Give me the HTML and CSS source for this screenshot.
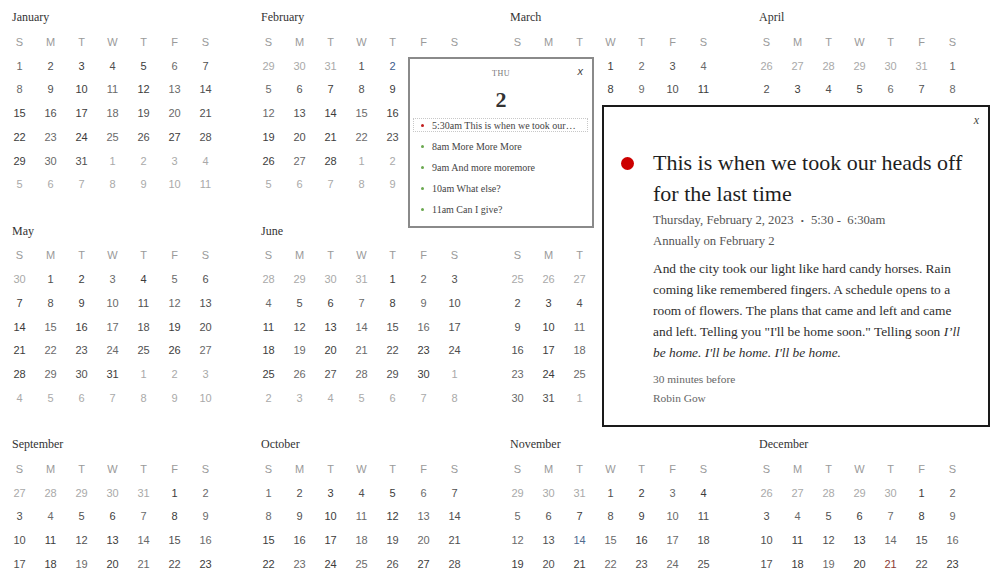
FILE: index.html
```html
<!DOCTYPE html>
<html lang="en">
<head>
<meta charset="utf-8">
<title>Calendar 2023</title>
<link rel="stylesheet" href="styles.css">
</head>
<body>
<main class="year" id="year"></main>

<section class="popover">
  <div class="pop-dow">THU</div>
  <span class="pop-close">x</span>
  <div class="pop-date">2</div>
  <ul class="pop-list">
    <li class="pop-item active"><span class="bullet red"></span>5:30am This is when we took our…</li>
    <li class="pop-item"><span class="bullet green"></span>8am More More More</li>
    <li class="pop-item"><span class="bullet green"></span>9am And more moremore</li>
    <li class="pop-item"><span class="bullet green"></span>10am What else?</li>
    <li class="pop-item"><span class="bullet green"></span>11am Can I give?</li>
  </ul>
</section>

<article class="card">
  <span class="card-close">x</span>
  <div class="card-body">
    <span class="card-dot"></span>
    <div class="card-content">
      <h1 class="card-title">This is when we took our heads off for the last time</h1>
      <p class="card-when">Thursday, February 2, 2023 <span class="sep">•</span> 5:30 - &nbsp;6:30am</p>
      <p class="card-when">Annually on February 2</p>
      <p class="card-desc">And the city took our light like hard candy horses. Rain coming like remembered fingers. A schedule opens to a room of flowers. The plans that came and left and came and left. Telling you "I'll be home soon." Telling soon <em>I’ll be home. I'll be home. I'll be home.</em></p>
      <p class="card-meta">30 minutes before</p>
      <p class="card-meta">Robin Gow</p>
    </div>
  </div>
</article>

<script src="script.js"></script>
</body>
</html>
```

FILE: styles.css
```css
html, body {
  margin: 0;
  padding: 0;
  overflow: hidden;
  background: #fff;
}

body {
  position: relative;
  width: 1000px;
  height: 586px;
  font-family: "Liberation Sans", Arial, sans-serif;
}

.year {
  display: grid;
  grid-template-columns: repeat(4, 217px);
  column-gap: 32px;
  row-gap: 21.25px;
  padding: 4px 0 0 4px;
  height: 571px;
  overflow: hidden;
}

.month-title {
  height: 26px;
  line-height: 26px;
  padding-left: 8px;
  font-family: "Liberation Serif", "Times New Roman", serif;
  font-size: 12px;
  color: #333;
}

.grid {
  display: grid;
  grid-template-columns: repeat(7, 31px);
  grid-auto-rows: 23.75px;
}

.grid span {
  display: flex;
  align-items: center;
  justify-content: center;
  font-size: 11px;
}

.grid .wd { color: #9a9a9a; }
.grid .d1 { color: #3c3c3c; }
.grid .d2 { color: #505050; }
.grid .d3 { color: #6a6a6a; }
.grid .out { color: #a9a9a9; }
.grid .today { color: #3d5b8c; }
.grid .blue { color: #4f6a8e; }
.grid .red { color: #8a3b35; }

/* Day popover */
.popover {
  position: absolute;
  left: 408px;
  top: 57px;
  width: 182px;
  height: 167px;
  border: 2px solid #8a8a8a;
  background: #fff;
  font-family: "Liberation Serif", "Times New Roman", serif;
}

.pop-dow {
  margin-top: 8px;
  text-align: center;
  font-size: 8px;
  line-height: 14px;
  letter-spacing: 0.5px;
  color: #777;
}

.pop-close {
  position: absolute;
  top: 6px;
  right: 9px;
  font-family: "Liberation Sans", Arial, sans-serif;
  font-style: italic;
  font-size: 11px;
  color: #444;
}

.pop-date {
  margin-top: 5px;
  text-align: center;
  font-size: 22px;
  line-height: 28px;
  font-weight: bold;
  color: #333;
}

.pop-list {
  list-style: none;
  margin: 4px 4px 0 3px;
  padding: 0;
}

.pop-item {
  display: flex;
  align-items: center;
  height: 12px;
  margin-bottom: 7px;
  padding-left: 7px;
  border: 1px dotted transparent;
  font-size: 10px;
  color: #444;
  white-space: nowrap;
}

.pop-item.active {
  border-color: #c8c8c8;
}

.bullet {
  width: 3px;
  height: 3px;
  border-radius: 50%;
  margin-right: 8px;
  flex: none;
}

.bullet.red { background: #c21d1d; }
.bullet.green { background: #6aa84f; }

/* Event card */
.card {
  position: absolute;
  left: 602px;
  top: 105px;
  width: 384px;
  height: 318px;
  border: 2px solid #1a1a1a;
  background: #fff;
  font-family: "Liberation Serif", "Times New Roman", serif;
}

.card-close {
  position: absolute;
  top: 6px;
  right: 9px;
  font-style: italic;
  font-size: 12px;
  color: #444;
}

.card-body {
  display: flex;
  padding: 39.5px 25px 0 17px;
}

.card-dot {
  flex: none;
  width: 13px;
  height: 13px;
  margin-top: 10px;
  margin-right: 19px;
  border-radius: 50%;
  background: #cc0000;
}

.card-content {
  flex: 1;
}

.card-title {
  margin: 0 0 1.5px;
  font-size: 22px;
  line-height: 31px;
  font-weight: normal;
  color: #1e1e1e;
}

.card-when {
  margin: 0;
  font-size: 12.7px;
  line-height: 20px;
  color: #555;
}

.sep {
  font-size: 9px;
  padding: 0 4px;
}

.card-desc {
  margin: 6.5px 0 0;
  font-size: 13.4px;
  line-height: 21.1px;
  color: #2e2e2e;
}

.card-meta {
  margin: 0;
  font-size: 11.4px;
  line-height: 19px;
  color: #666;
}

.card-desc + .card-meta {
  margin-top: 7.5px;
}
```

FILE: script.js
```js
(function () {
  var names = ["January", "February", "March", "April", "May", "June",
               "July", "August", "September", "October", "November", "December"];
  var wds = ["S", "M", "T", "W", "T", "F", "S"];
  var year = 2023;
  var root = document.getElementById("year");
  var special = { "1-2": "today", "10-14": "blue", "11-21": "red" };

  names.forEach(function (name, m) {
    var block = document.createElement("section");
    block.className = "month";
    var title = document.createElement("div");
    title.className = "month-title";
    title.textContent = m === 6 ? "" : name;
    block.appendChild(title);

    var grid = document.createElement("div");
    grid.className = "grid";
    wds.forEach(function (w) {
      var s = document.createElement("span");
      s.className = "wd";
      s.textContent = w;
      grid.appendChild(s);
    });

    var first = new Date(year, m, 1);
    var start = new Date(year, m, 1 - first.getDay());
    var weeks = m >= 8 ? 4 : 6;
    for (var i = 0; i < weeks * 7; i++) {
      var d = new Date(start.getFullYear(), start.getMonth(), start.getDate() + i);
      var s = document.createElement("span");
      var day = d.getDate();
      var cls;
      if (d.getMonth() !== m) {
        cls = "out";
      } else if (special[m + "-" + day]) {
        cls = special[m + "-" + day];
      } else {
        cls = ["d1", "d2", "d3"][(day * 7 + m * 5 + (day % 4)) % 3];
      }
      s.className = cls;
      s.textContent = day;
      grid.appendChild(s);
    }
    block.appendChild(grid);
    root.appendChild(block);
  });
})();
```
